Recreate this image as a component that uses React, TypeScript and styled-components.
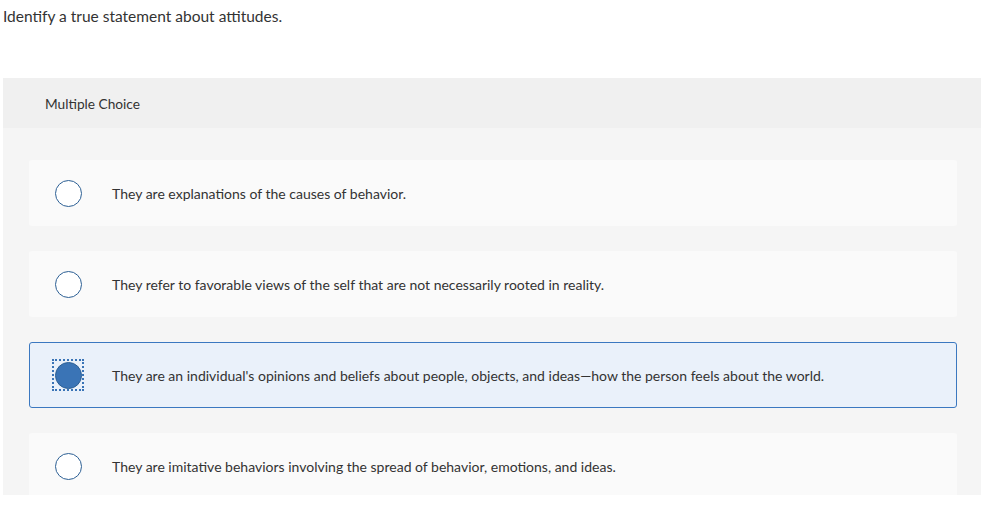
import styled, { createGlobalStyle } from "styled-components";

//style

const GlobalStyle = createGlobalStyle`
  body {
    margin: 0;
    background: #fff;
    font-family: Lato, "Liberation Sans", sans-serif;
    color: #333;
  }
`;

const Page = styled.div`
  width: 981px;
  height: 495px;
  overflow: hidden;
`;

const Question = styled.p`
  margin: 0;
  padding: 6px 0 0 3px;
  font-size: 15.5px;
  line-height: 21px;
  color: #333;
`;

const Panel = styled.section`
  margin: 51px 0 0 3px;
  background: #f5f5f5;
`;

const PanelHeader = styled.div`
  height: 50px;
  display: flex;
  align-items: center;
  padding-left: 42px;
  background: #f0f0f0;
  font-size: 13.7px;
  color: #333;
`;

const OptionList = styled.div`
  display: flex;
  flex-direction: column;
  gap: 25px;
  padding: 32px 24px 0 26px;
`;

const Option = styled.label<{ $selected: boolean }>`
  height: 66px;
  box-sizing: border-box;
  display: flex;
  align-items: center;
  gap: 28px;
  padding-left: ${(p) => (p.$selected ? "22px" : "23px")};
  border-radius: 3px;
  background: ${(p) => (p.$selected ? "#eaf1fa" : "#fafafa")};
  border: ${(p) => (p.$selected ? "1px solid #3b78c0" : "none")};
  cursor: pointer;
`;

const RadioFocus = styled.span<{ $selected: boolean }>`
  width: 32px;
  height: 32px;
  box-sizing: border-box;
  display: flex;
  align-items: center;
  justify-content: center;
  border: 2px dotted ${(p) => (p.$selected ? "#3a74b6" : "transparent")};
`;

const Radio = styled.span<{ $selected: boolean }>`
  width: 27px;
  height: 27px;
  box-sizing: border-box;
  border-radius: 50%;
  border: 1.5px solid #2c5f94;
  background: ${(p) => (p.$selected ? "#3a74b6" : "#fff")};
`;

const OptionText = styled.span`
  font-size: 14px;
  color: #333;
`;

//

const options = [
  "They are explanations of the causes of behavior.",
  "They refer to favorable views of the self that are not necessarily rooted in reality.",
  "They are an individual's opinions and beliefs about people, objects, and ideas\u2014how the person feels about the world.",
  "They are imitative behaviors involving the spread of behavior, emotions, and ideas.",
];

function App() {
  const selected = 2;

  return (
    <Page>
      <GlobalStyle />
      <Question>Identify a true statement about attitudes.</Question>
      <Panel>
        <PanelHeader>Multiple Choice</PanelHeader>
        <OptionList>
          {options.map((text, i) => (
            <Option key={i} $selected={i === selected}>
              <RadioFocus $selected={i === selected}>
                <Radio $selected={i === selected} />
              </RadioFocus>
              <OptionText>{text}</OptionText>
            </Option>
          ))}
        </OptionList>
      </Panel>
    </Page>
  );
}

export default App;
